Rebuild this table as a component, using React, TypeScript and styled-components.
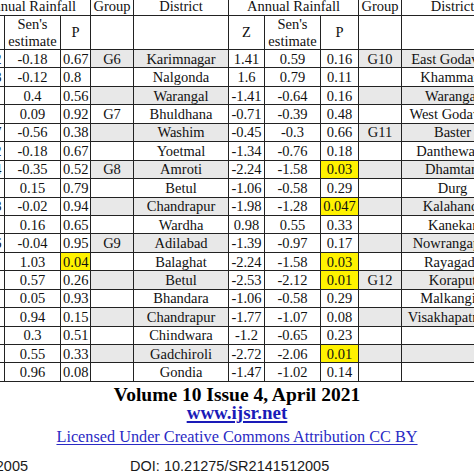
import React from 'react';
import styled, { createGlobalStyle } from 'styled-components';

const Global = createGlobalStyle`
  html, body { margin: 0; padding: 0; background: #fff; }
  body { overflow: hidden; }
`;

const Page = styled.div`
  width: 474px;
  height: 474px;
  overflow: hidden;
  background: #fff;
  font-family: "Liberation Serif", "Times New Roman", serif;
  color: #111;
`;

const Table = styled.table`
  border-collapse: collapse;
  table-layout: fixed;
  width: 535px;
  margin: -4px 0 0 -32px;
  font-size: 14.5px;
`;

const Col = styled.col<{ $w: number }>`
  width: ${(p) => p.$w}px;
`;

const HeadRow = styled.tr<{ $h: number }>`
  height: ${(p) => p.$h}px;
`;

const DataRow = styled.tr`
  height: 18.45px;
`;

const Th = styled.th`
  border: 1px solid #222;
  font-weight: normal;
  padding: 0;
  text-align: center;
  vertical-align: middle;
  line-height: 16.5px;
  white-space: nowrap;
  overflow: visible;
`;

const Td = styled.td<{ $shade?: boolean; $hi?: boolean; $left?: boolean }>`
  border: 1px solid #222;
  padding: 0;
  padding-left: ${(p) => (p.$left ? '2px' : '0')};
  text-align: ${(p) => (p.$left ? 'left' : 'center')};
  vertical-align: middle;
  line-height: 16px;
  white-space: nowrap;
  overflow: hidden;
  background: ${(p) => (p.$hi ? '#fff200' : p.$shade ? '#e8e8e8' : '#fff')};
`;

const Footer = styled.div`
  display: flex;
  flex-direction: column;
  align-items: center;
  width: 474px;
`;

const Volume = styled.div`
  font-weight: bold;
  font-size: 19.5px;
  line-height: 16px;
  margin-top: 5.4px;
  color: #000;
`;

const Site = styled.a`
  display: block;
  font-weight: bold;
  font-size: 19px;
  line-height: 16px;
  margin-top: 2px;
  color: #1a1ab8;
  text-decoration: underline;
  text-decoration-thickness: 2px;
  text-underline-offset: 2px;
`;

const License = styled.a`
  display: block;
  font-size: 16.25px;
  line-height: 20px;
  margin-top: 5.6px;
  color: #2a2ac4;
  text-decoration: underline;
  text-underline-offset: 2px;
`;

const DoiRow = styled.div`
  align-self: flex-start;
  display: flex;
  align-items: baseline;
  gap: 102px;
  margin-top: 10px;
  margin-left: -138px;
  font-family: "Liberation Sans", Arial, sans-serif;
  font-size: 14.5px;
  line-height: 18px;
  color: #1a1a1a;
  white-space: nowrap;
`;

const PaperId = styled.span`
  flex: 0 0 166px;
  text-align: right;
`;

type Side = {
  z: string;
  sen: string;
  p: string;
  hi?: boolean;
  group: string;
  district: string;
};

const left: Side[] = [
  { z: '-0.42', sen: '-0.18', p: '0.67', group: 'G6', district: 'Karimnagar' },
  { z: '-0.98', sen: '-0.12', p: '0.8', group: '', district: 'Nalgonda' },
  { z: '0.58', sen: '0.4', p: '0.56', group: '', district: 'Warangal' },
  { z: '0.1', sen: '0.09', p: '0.92', group: 'G7', district: 'Bhuldhana' },
  { z: '-0.87', sen: '-0.56', p: '0.38', group: '', district: 'Washim' },
  { z: '-0.42', sen: '-0.18', p: '0.67', group: '', district: 'Yoetmal' },
  { z: '-0.64', sen: '-0.35', p: '0.52', group: 'G8', district: 'Amroti' },
  { z: '0.27', sen: '0.15', p: '0.79', group: '', district: 'Betul' },
  { z: '-0.08', sen: '-0.02', p: '0.94', group: '', district: 'Chandrapur' },
  { z: '0.45', sen: '0.16', p: '0.65', group: '', district: 'Wardha' },
  { z: '-0.06', sen: '-0.04', p: '0.95', group: 'G9', district: 'Adilabad' },
  { z: '2.04', sen: '1.03', p: '0.04', hi: true, group: '', district: 'Balaghat' },
  { z: '1.12', sen: '0.57', p: '0.26', group: '', district: 'Betul' },
  { z: '0.08', sen: '0.05', p: '0.93', group: '', district: 'Bhandara' },
  { z: '1.43', sen: '0.94', p: '0.15', group: '', district: 'Chandrapur' },
  { z: '0.65', sen: '0.3', p: '0.51', group: '', district: 'Chindwara' },
  { z: '0.98', sen: '0.55', p: '0.33', group: '', district: 'Gadchiroli' },
  { z: '1.77', sen: '0.96', p: '0.08', group: '', district: 'Gondia' },
];

const right: Side[] = [
  { z: '1.41', sen: '0.59', p: '0.16', group: 'G10', district: 'East Godavari' },
  { z: '1.6', sen: '0.79', p: '0.11', group: '', district: 'Khammam' },
  { z: '-1.41', sen: '-0.64', p: '0.16', group: '', district: 'Warangal' },
  { z: '-0.71', sen: '-0.39', p: '0.48', group: '', district: 'West Godavari' },
  { z: '-0.45', sen: '-0.3', p: '0.66', group: 'G11', district: 'Baster' },
  { z: '-1.34', sen: '-0.76', p: '0.18', group: '', district: 'Danthewada' },
  { z: '-2.24', sen: '-1.58', p: '0.03', hi: true, group: '', district: 'Dhamtari' },
  { z: '-1.06', sen: '-0.58', p: '0.29', group: '', district: 'Durg' },
  { z: '-1.98', sen: '-1.28', p: '0.047', hi: true, group: '', district: 'Kalahandi' },
  { z: '0.98', sen: '0.55', p: '0.33', group: '', district: 'Kanekar' },
  { z: '-1.39', sen: '-0.97', p: '0.17', group: '', district: 'Nowrangapur' },
  { z: '-2.24', sen: '-1.58', p: '0.03', hi: true, group: '', district: 'Rayagada' },
  { z: '-2.53', sen: '-2.12', p: '0.01', hi: true, group: 'G12', district: 'Koraput' },
  { z: '-1.06', sen: '-0.58', p: '0.29', group: '', district: 'Malkangiri' },
  { z: '-1.77', sen: '-1.07', p: '0.08', group: '', district: 'Visakhapatnam' },
  { z: '-1.2', sen: '-0.65', p: '0.23', group: '', district: '' },
  { z: '-2.72', sen: '-2.06', p: '0.01', hi: true, group: '', district: '' },
  { z: '-1.47', sen: '-1.02', p: '0.14', group: '', district: '' },
];

const widths = [36, 56, 30, 43, 95, 36, 56, 38, 43, 102];

export default function App() {
  return (
    <Page>
      <Global />
      <Table>
        <colgroup>
          {widths.map((w, i) => (
            <Col key={i} $w={w} />
          ))}
        </colgroup>
        <thead>
          <HeadRow $h={19}>
            <Th colSpan={3}>Annual Rainfall</Th>
            <Th>Group</Th>
            <Th>District</Th>
            <Th colSpan={3}>Annual Rainfall</Th>
            <Th>Group</Th>
            <Th>District</Th>
          </HeadRow>
          <HeadRow $h={33}>
            <Th>Z</Th>
            <Th>
              Sen's
              <br />
              estimate
            </Th>
            <Th>P</Th>
            <Th />
            <Th />
            <Th>Z</Th>
            <Th>
              Sen's
              <br />
              estimate
            </Th>
            <Th>P</Th>
            <Th />
            <Th />
          </HeadRow>
        </thead>
        <tbody>
          {left.map((l, i) => {
            const r = right[i];
            const shade = i % 2 === 0;
            return (
              <DataRow key={i}>
                <Td>{l.z}</Td>
                <Td>{l.sen}</Td>
                <Td $left $hi={l.hi}>
                  {l.p}
                </Td>
                <Td $shade={shade}>{l.group}</Td>
                <Td $shade={shade}>{l.district}</Td>
                <Td>{r.z}</Td>
                <Td>{r.sen}</Td>
                <Td $hi={r.hi}>{r.p}</Td>
                <Td $shade={shade}>{r.group}</Td>
                <Td $shade={shade}>{r.district}</Td>
              </DataRow>
            );
          })}
        </tbody>
      </Table>
      <Footer>
        <Volume>Volume 10 Issue 4, April 2021</Volume>
        <Site href="#">www.ijsr.net</Site>
        <License href="#">Licensed Under Creative Commons Attribution CC BY</License>
        <DoiRow>
          <PaperId>Paper ID: SR2141512005</PaperId>
          <span>DOI: 10.21275/SR2141512005</span>
        </DoiRow>
      </Footer>
    </Page>
  );
}
